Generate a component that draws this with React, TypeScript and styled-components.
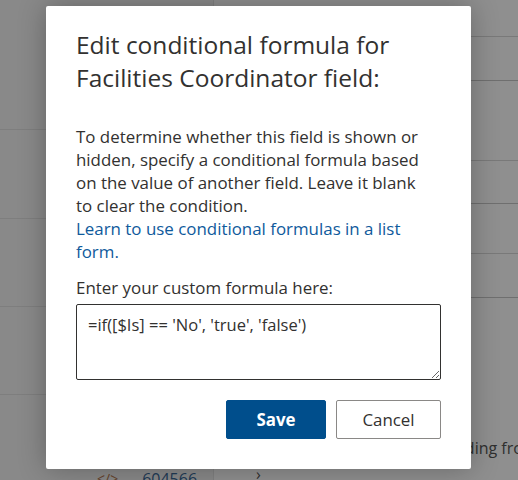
import React from 'react';
import styled, { createGlobalStyle } from 'styled-components';

const GlobalStyle = createGlobalStyle`
  html, body { margin: 0; padding: 0; }
  body {
    width: 518px; height: 480px; overflow: hidden;
    font-family: 'Open Sans', 'Noto Sans', sans-serif;
    background: #fff;
  }
`

const Page = styled.div`
  position: relative;
  width: 518px; height: 480px;
  display: grid;
  grid-template-columns: 213px 1fr;
  overflow: hidden;
`

const LeftPane = styled.div`
  background: #f4f4f4;
  display: flex; flex-direction: column;
`

const RightPane = styled.div`
  background: #ffffff;
  border-left: 1px solid #e6e6e6;
  display: flex; flex-direction: column;
`

const Row = styled.div<{ $h: number, $line?: string }>`
  flex: 0 0 ${p => p.$h}px;
  box-sizing: border-box;
  border-bottom: 1px solid ${p => p.$line || '#e1e1e1'};
  display: flex; align-items: flex-end;
`

const IdRow = styled.div`
  display: flex; align-items: flex-start; gap: 24px;
  padding-left: 97px;
  height: 20px;
  font-size: 16px;
  line-height: 20px;
`

const CodeIcon = styled.span`
  color: #b7794f;
  font-size: 14px;
`

const IdText = styled.span`
  color: #3b6a9a;
`

const Trailing = styled.div<{ $pad: number }>`
  flex: 1;
  display: flex; align-items: flex-start; justify-content: flex-start;
  padding-left: ${p => p.$pad}px;
  color: #555;
  font-size: 16px;
  line-height: 20px;
  white-space: nowrap;
`

const Overlay = styled.div`
  position: absolute; inset: 0;
  background: rgba(0, 0, 0, 0.44);
`

const Dialog = styled.div`
  position: absolute;
  left: 46px; top: 6px;
  width: 425px; height: 463px;
  box-sizing: border-box;
  background: #fff;
  border-radius: 2px;
  box-shadow: 0 0 28px rgba(0, 0, 0, 0.28);
  padding: 22px 30px 0 30px;
  display: flex; flex-direction: column;
  color: #323130;
`

const Title = styled.h1`
  margin: 0;
  font-size: 24.5px;
  line-height: 33px;
  font-weight: 400;
  color: #323130;
`

const Body = styled.p`
  margin: 31px 0 0 0;
  max-width: 352px;
  font-size: 16.9px;
  line-height: 23px;
`

const LearnLink = styled.a`
  color: #0f5a9c;
  text-decoration: none;
  display: block;
`

const FieldLabel = styled.label`
  display: block;
  margin-top: 13px;
  font-size: 16.9px;
  line-height: 23px;
`

const Formula = styled.textarea`
  display: block;
  box-sizing: border-box;
  margin-top: 5px;
  width: 365px; height: 76px;
  border: 1px solid #323130;
  border-radius: 2px;
  padding: 10px 11px;
  font-family: 'Open Sans', sans-serif;
  font-size: 16.5px;
  line-height: 20px;
  color: #323130;
  resize: vertical;
  outline: none;
`

const Actions = styled.div`
  display: flex; justify-content: flex-end; gap: 10px;
  margin-top: 20px;
`

const Button = styled.button<{ $primary?: boolean }>`
  height: 39px;
  box-sizing: border-box;
  width: ${p => p.$primary ? 100 : 105}px;
  border-radius: 2px;
  font-family: 'Open Sans', sans-serif;
  font-size: 16.9px;
  font-weight: ${p => p.$primary ? 700 : 400};
  background: ${p => p.$primary ? '#004e8c' : '#fff'};
  color: ${p => p.$primary ? '#fff' : '#323130'};
  border: 1px solid ${p => p.$primary ? '#004e8c' : '#8a8886'};
  cursor: pointer;
`

const leftRows = [130, 89, 88, 88]
const rightRows = [37, 44, 80, 43, 50, 44]

export default function App() {
  return <>
    <GlobalStyle />
    <Page>
      <LeftPane>
        {leftRows.map((h, i) => <Row key={i} $h={h} />)}
        <Row $h={74} $line='transparent' />
        <IdRow>
          <CodeIcon>&lt;/&gt;</CodeIcon>
          <IdText>604566</IdText>
        </IdRow>
      </LeftPane>
      <RightPane>
        {rightRows.map((h, i) => <Row key={i} $h={h} $line={i % 2 ? '#c6c6c6' : '#d8d8d8'} />)}
        <Row $h={140} $line='transparent' />
        <Trailing $pad={224}><span>Loading from</span></Trailing>
        <Trailing $pad={42}><span>›</span></Trailing>
      </RightPane>
      <Overlay />
      <Dialog role='dialog'>
        <Title>Edit conditional formula for Facilities Coordinator field:</Title>
        <Body>
          To determine whether this field is shown or hidden, specify a conditional formula based
          on the value of another field. Leave it blank to clear the condition.
          <LearnLink href='#'>Learn to use conditional formulas in a list form.</LearnLink>
        </Body>
        <FieldLabel>Enter your custom formula here:</FieldLabel>
        <Formula defaultValue="=if([$Is] == 'No', 'true', 'false')" />
        <Actions>
          <Button $primary>Save</Button>
          <Button>Cancel</Button>
        </Actions>
      </Dialog>
    </Page>
  </>
}
